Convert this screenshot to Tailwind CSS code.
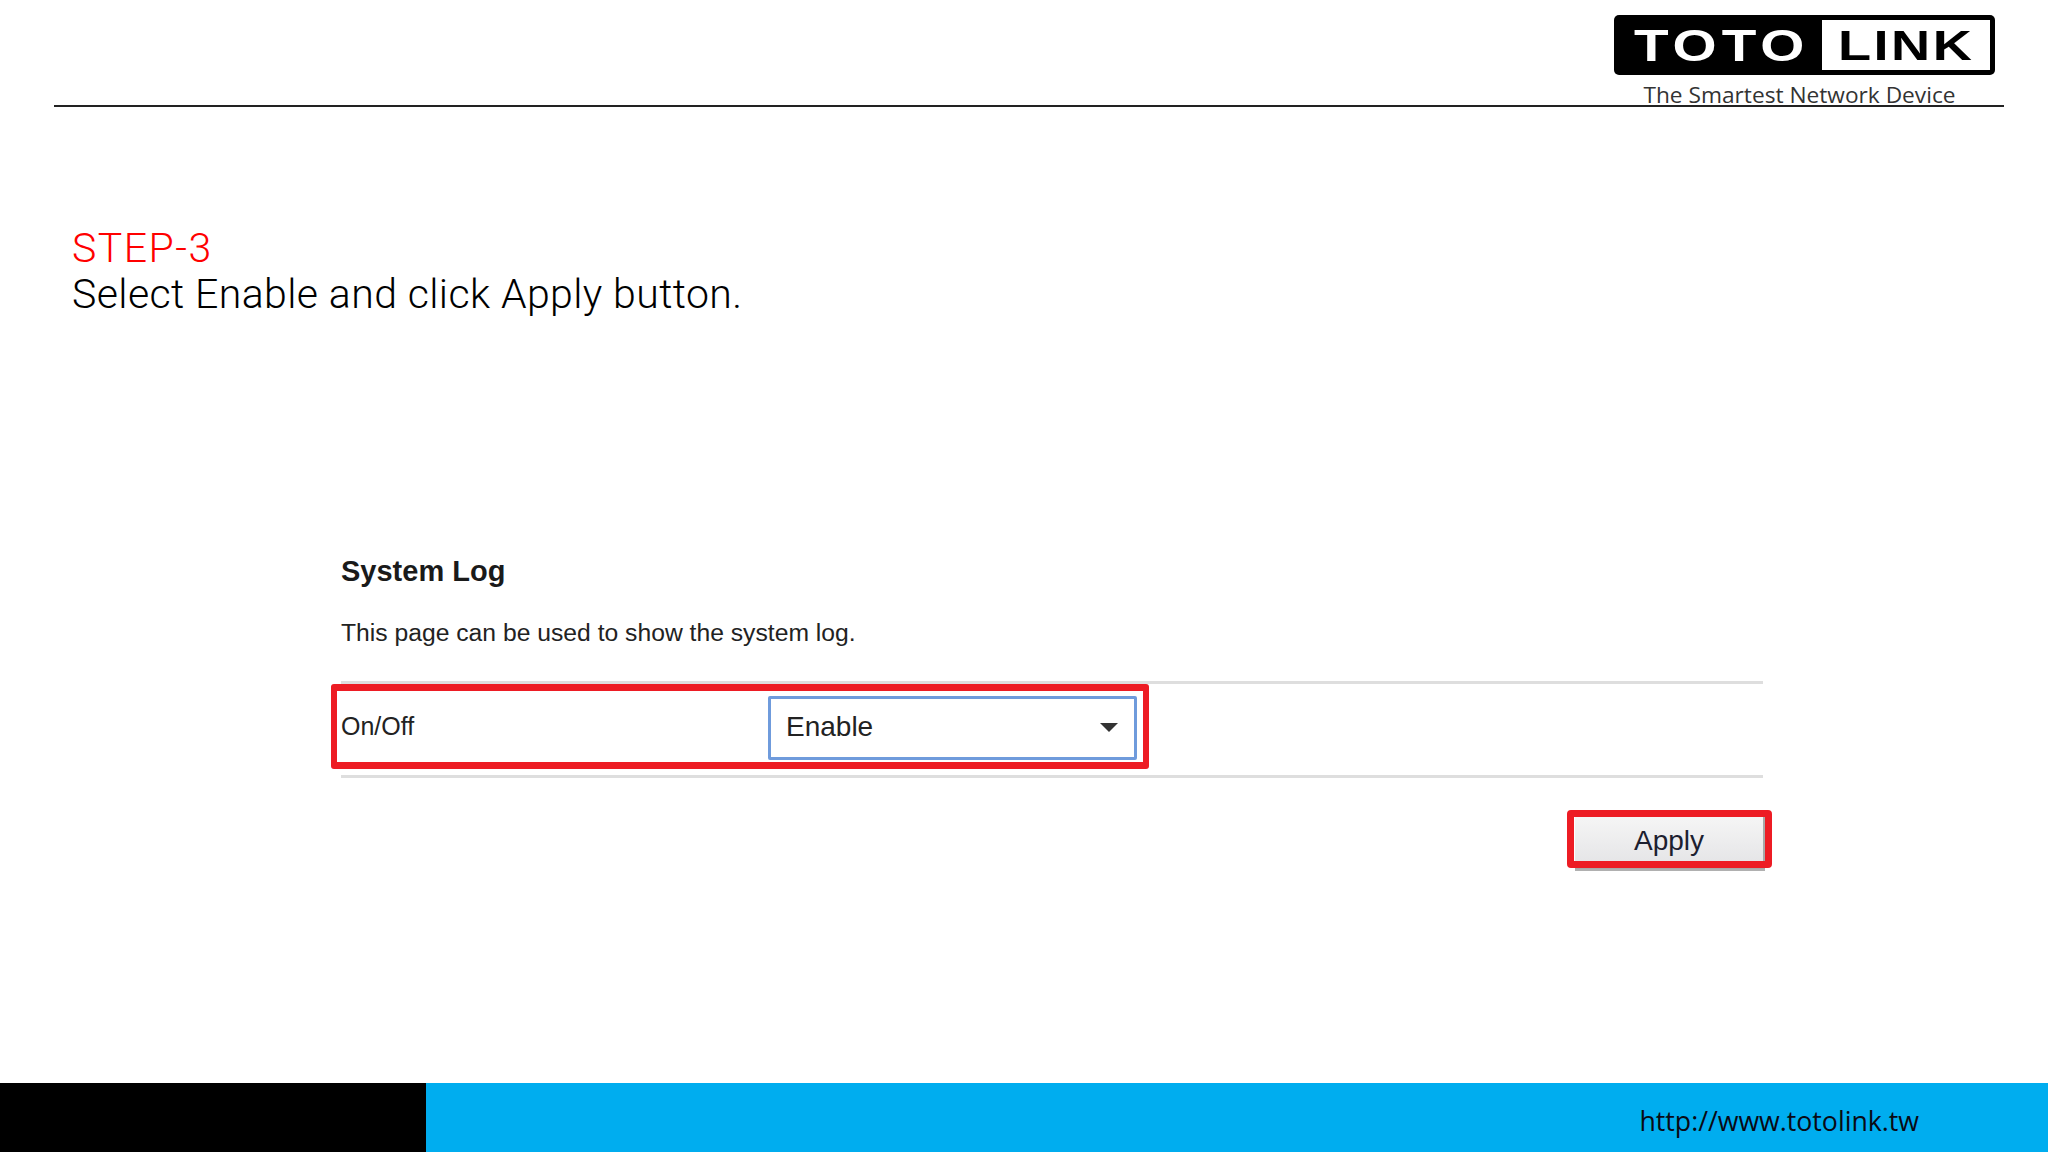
<!DOCTYPE html>
<html lang="en">
<head>
  <meta charset="UTF-8">
  <title>System Log - Step 3</title>
  <script src="https://cdn.jsdelivr.net/npm/@tailwindcss/browser@4"></script>
</head>
<body class="bg-white w-[2048px] h-[1152px] overflow-hidden flex flex-col font-['Liberation_Sans',sans-serif]">

  <!-- header with logo -->
  <header class="h-[107px] ml-[54px] w-[1950px] border-b-2 border-[#222] flex justify-end shrink-0">
    <div class="w-[381px] mr-[9px] mt-[15px] flex flex-col items-center">
      <div class="w-[381px] h-[60px] bg-black rounded-[5px] flex items-center p-[5px]">
        <div class="flex-1 flex justify-center pl-[2px]">
          <span class="inline-block scale-x-[1.26] text-white font-bold text-[45px] leading-none tracking-[4px]">TOTO</span>
        </div>
        <div class="w-[168px] h-[50px] bg-white flex items-center justify-center">
          <span class="inline-block scale-x-[1.26] text-black font-bold text-[43px] leading-none tracking-[2px]">LINK</span>
        </div>
      </div>
      <p class="mt-[8px] mr-[10px] text-[22.7px] leading-[24px] text-[#333] font-['Open_Sans',sans-serif] whitespace-nowrap">The Smartest Network Device</p>
    </div>
  </header>

  <main class="flex-1 flex flex-col">
    <section class="ml-[72px] mt-[118px] text-[41px] leading-[46px] font-['Roboto',sans-serif] font-light tracking-[0.4px]">
      <h2 class="text-[#ff0000] tracking-[1.5px]">STEP-3</h2>
      <p class="text-black">Select Enable and click Apply button.</p>
    </section>

    <section class="ml-[341px] w-[1422px] mt-[238px]">
      <h1 class="text-[29px] leading-[32px] font-bold text-[#1a1a1a]">System Log</h1>
      <p class="mt-[30px] text-[24.7px] leading-[32px] text-[#222]">This page can be used to show the system log.</p>

      <div class="mt-[32px] h-[97px] pb-[4px] border-y-[3px] border-[#dedede] flex items-center relative">
        <span class="w-[427px] mb-[2px] text-[25px] text-[#222]">On/Off</span>
        <div class="w-[369px] h-[64px] pb-[2px] border-[3px] border-[#6f9bdc] rounded-[2px] flex items-center justify-between pl-[15px] pr-[16px]">
          <span class="text-[28px] text-[#222]">Enable</span>
          <span class="w-0 h-0 mt-[2px] border-x-[9px] border-x-transparent border-t-[9px] border-t-[#333]"></span>
        </div>
        <div class="absolute left-[-10px] top-0 w-[818px] h-[85px] border-x-[6px] border-y-[7px] border-[#ed1c24] rounded-[3px]"></div>
      </div>

      <div class="mt-[39px] flex justify-end relative">
        <button class="w-[190px] h-[52px] mr-[-2px] pb-[2px] bg-gradient-to-b from-[#f5f5f5] to-[#e4e4e6] border-r-2 border-b-2 border-[#a8a8a8] shadow-[0_2px_0_#b0b0b0] text-[28px] text-[#1c2030]">Apply</button>
        <div class="absolute right-[-9px] top-[-7px] w-[205px] h-[58px] border-[7px] border-[#ed1c24] rounded-[4px]"></div>
      </div>
    </section>
  </main>

  <footer class="h-[69px] shrink-0 flex">
    <div class="w-[426px] bg-black"></div>
    <div class="flex-1 bg-[#00adef] flex items-center justify-end pr-[129px]">
      <a class="text-[26.7px] leading-none mt-[7px] text-[#0a0a14] font-['Open_Sans',sans-serif]">http://www.totolink.tw</a>
    </div>
  </footer>

</body>
</html>
